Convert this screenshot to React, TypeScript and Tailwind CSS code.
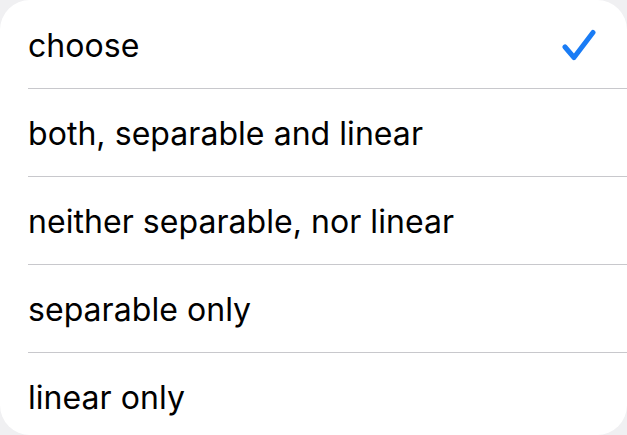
const options = [
  "choose",
  "both, separable and linear",
  "neither separable, nor linear",
  "separable only",
  "linear only",
];

export default function App() {
  return (
    <div className="h-[435px] w-[627px] overflow-hidden bg-[#f0f0f2]">
      <div
        className="h-full w-full rounded-[30px] bg-white pl-[28px] pt-px"
        style={{ fontFamily: "Inter, 'Liberation Sans', sans-serif" }}
      >
        {options.map((label, i) => (
          <div
            key={label}
            className={
              "flex h-[88px] items-center pr-[31px] " +
              (i < options.length - 1 ? "border-b border-[#c8c8cc]" : "")
            }
          >
            <span className="flex-1 pt-[2px] text-[32px] leading-none tracking-[0.05px] text-black">
              {label}
            </span>
            {i === 0 && (
              <svg width="34" height="32" viewBox="0 0 34 32" fill="none">
                <path
                  d="M3 18 L12 28.5 L31 3.5"
                  stroke="#1a7cf5"
                  strokeWidth="5"
                  strokeLinecap="round"
                  strokeLinejoin="round"
                />
              </svg>
            )}
          </div>
        ))}
      </div>
    </div>
  );
}
